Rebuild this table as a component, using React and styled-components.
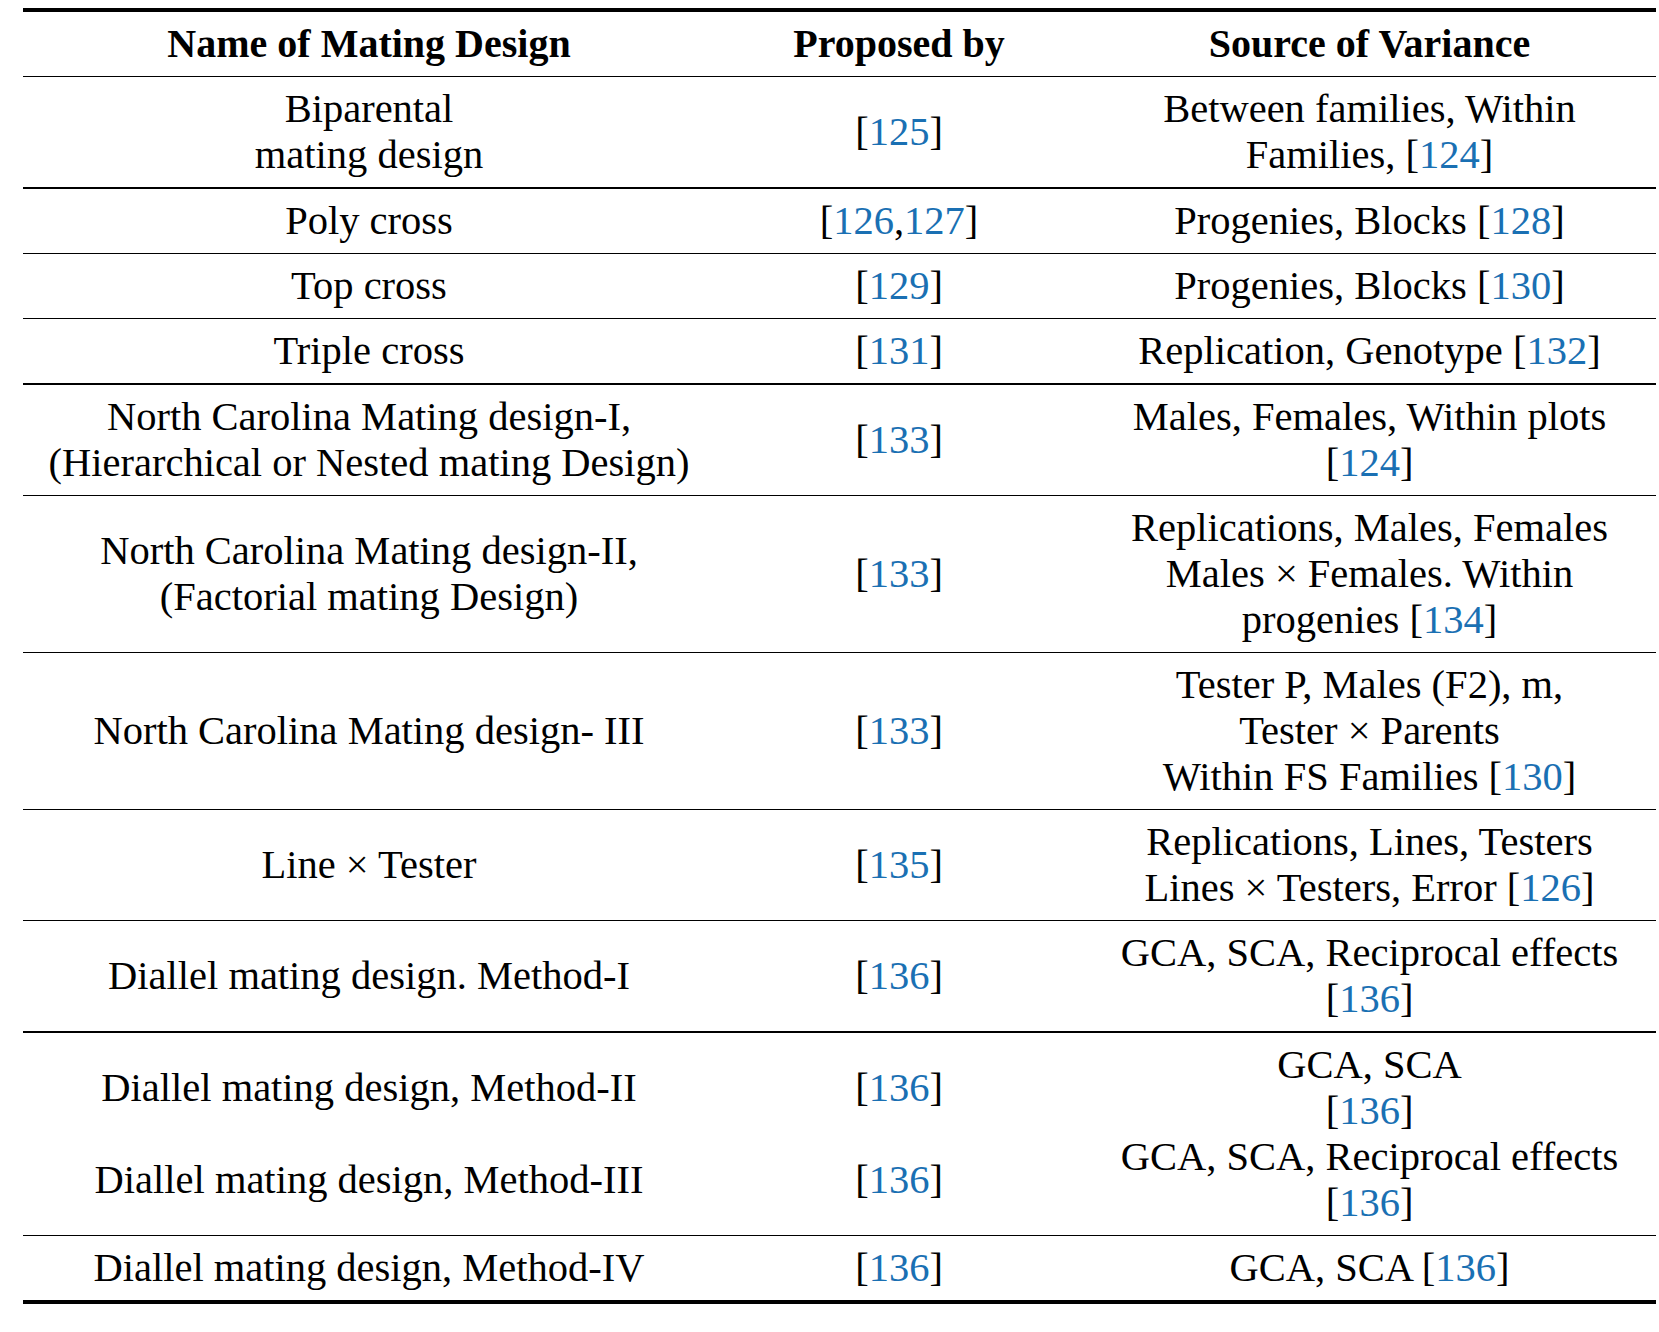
import React from "react";
import styled, { createGlobalStyle } from "styled-components";

const GlobalStyle = createGlobalStyle`
  html, body {
    margin: 0;
    padding: 0;
    background: #fff;
  }
`;

const Page = styled.div`
  padding: 8px 3px 0 23px;
  font-family: "Liberation Serif", "Times New Roman", serif;
  font-size: 40.5px;
  line-height: 46px;
  color: #000;
`;

const Table = styled.div`
  width: 1633px;
  border-top: 4px solid #000;
  border-bottom: 4px solid #000;
`;

const Row = styled.div`
  display: grid;
  grid-template-columns: 692px 368px 573px;
  border-bottom: ${(p) => (p.rule === 0 ? "none" : `${p.rule || 1}px solid #000`)};
  &:last-child {
    border-bottom: none;
  }
`;

const Cell = styled.div`
  display: flex;
  flex-direction: column;
  justify-content: center;
  align-items: center;
  text-align: center;
  white-space: nowrap;
  padding-top: ${(p) => (p.noTop ? 0 : 9)}px;
  padding-bottom: ${(p) => (p.noBottom ? 0 : 9)}px;
  font-weight: ${(p) => (p.head ? 700 : 400)};
  font-size: ${(p) => (p.head ? "40px" : "inherit")};
`;

const Ref = styled.span`
  color: #1a70b3;
`;

// turns "Foo [125]" into text with blue citation numbers
const renderLine = (line, key) => {
  const parts = line.split(/(\[[\d,]+\])/);
  return (
    <div key={key}>
      {parts.map((part, i) => {
        if (!/^\[[\d,]+\]$/.test(part)) return part;
        const nums = part.slice(1, -1).split(",");
        return (
          <React.Fragment key={i}>
            [
            {nums.map((n, j) => (
              <React.Fragment key={j}>
                {j > 0 && ","}
                <Ref>{n}</Ref>
              </React.Fragment>
            ))}
            ]
          </React.Fragment>
        );
      })}
    </div>
  );
};

const Text = ({ value }) => value.split("\n").map((l, i) => renderLine(l, i));

const rows = [
  { name: "Biparental\nmating design", by: "[125]", src: "Between families, Within\nFamilies, [124]", rule: 2 },
  { name: "Poly cross", by: "[126,127]", src: "Progenies, Blocks [128]" },
  { name: "Top cross", by: "[129]", src: "Progenies, Blocks [130]" },
  { name: "Triple cross", by: "[131]", src: "Replication, Genotype [132]", rule: 2 },
  {
    name: "North Carolina Mating design-I,\n(Hierarchical or Nested mating Design)",
    by: "[133]",
    src: "Males, Females, Within plots\n[124]",
  },
  {
    name: "North Carolina Mating design-II,\n(Factorial mating Design)",
    by: "[133]",
    src: "Replications, Males, Females\nMales × Females. Within\nprogenies [134]",
  },
  {
    name: "North Carolina Mating design- III",
    by: "[133]",
    src: "Tester P, Males (F2), m,\nTester × Parents\nWithin FS Families [130]",
  },
  { name: "Line × Tester", by: "[135]", src: "Replications, Lines, Testers\nLines × Testers, Error [126]" },
  { name: "Diallel mating design. Method-I", by: "[136]", src: "GCA, SCA, Reciprocal effects\n[136]", rule: 2 },
  { name: "Diallel mating design, Method-II", by: "[136]", src: "GCA, SCA\n[136]", rule: 0, noBottom: true },
  { name: "Diallel mating design, Method-III", by: "[136]", src: "GCA, SCA, Reciprocal effects\n[136]", noTop: true },
  { name: "Diallel mating design, Method-IV", by: "[136]", src: "GCA, SCA [136]" },
];

const App = () => {
  return (
    <Page>
      <GlobalStyle />
      <Table>
        <Row>
          <Cell head>Name of Mating Design</Cell>
          <Cell head>Proposed by</Cell>
          <Cell head>Source of Variance</Cell>
        </Row>
        {rows.map((r, i) => (
          <Row key={i} rule={r.rule}>
            <Cell noTop={r.noTop} noBottom={r.noBottom}>
              <Text value={r.name} />
            </Cell>
            <Cell noTop={r.noTop} noBottom={r.noBottom}>
              <Text value={r.by} />
            </Cell>
            <Cell noTop={r.noTop} noBottom={r.noBottom}>
              <Text value={r.src} />
            </Cell>
          </Row>
        ))}
      </Table>
    </Page>
  );
};

export default App;
